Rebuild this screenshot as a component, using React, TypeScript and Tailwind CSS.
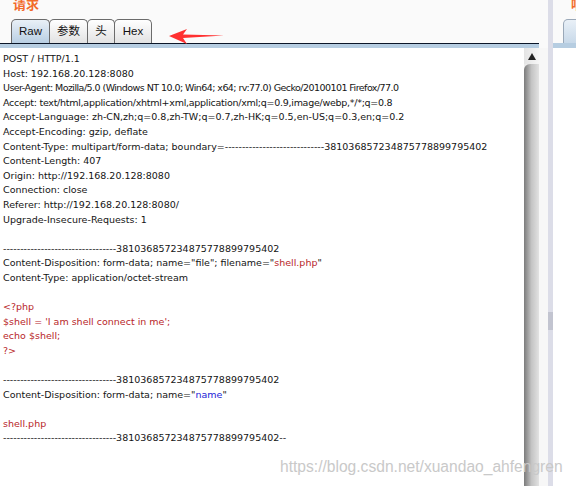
import React from 'react';

const NUM = '381036857234875778899795402';
const HEAD_BOUNDARY = '-----------------------------' + NUM;
const BODY_BOUNDARY = '---------------------------------' + NUM;

type Seg = { t: string; c?: 'red' | 'blue' };
type Line = { segs: Seg[]; cls?: string };

const L = (t: string, cls?: string): Line => ({ segs: [{ t }], cls });

const lines: Line[] = [
    L('POST / HTTP/1.1'),
    L('Host: 192.168.20.128:8080'),
    L('User-Agent: Mozilla/5.0 (Windows NT 10.0; Win64; x64; rv:77.0) Gecko/20100101 Firefox/77.0', 'tracking-[-0.55px]'),
    L('Accept: text/html,application/xhtml+xml,application/xml;q=0.9,image/webp,*/*;q=0.8', 'tracking-[-0.27px]'),
    L('Accept-Language: zh-CN,zh;q=0.8,zh-TW;q=0.7,zh-HK;q=0.5,en-US;q=0.3,en;q=0.2'),
    L('Accept-Encoding: gzip, deflate'),
    L('Content-Type: multipart/form-data; boundary=' + HEAD_BOUNDARY),
    L('Content-Length: 407'),
    L('Origin: http://192.168.20.128:8080'),
    L('Connection: close'),
    L('Referer: http://192.168.20.128:8080/'),
    L('Upgrade-Insecure-Requests: 1'),
    { segs: [] },
    L(BODY_BOUNDARY),
    { segs: [{ t: 'Content-Disposition: form-data; name="file"; filename="' }, { t: 'shell.php', c: 'red' }, { t: '"' }] },
    L('Content-Type: application/octet-stream'),
    { segs: [] },
    { segs: [{ t: '<?php', c: 'red' }] },
    { segs: [{ t: "$shell = 'I am shell connect in me';", c: 'red' }] },
    { segs: [{ t: 'echo $shell;', c: 'red' }] },
    { segs: [{ t: '?>', c: 'red' }] },
    { segs: [] },
    L(BODY_BOUNDARY),
    { segs: [{ t: 'Content-Disposition: form-data; name="' }, { t: 'name', c: 'blue' }, { t: '"' }] },
    { segs: [] },
    { segs: [{ t: 'shell.php', c: 'red' }] },
    L(BODY_BOUNDARY + '--'),
];

const tabs = [
    { label: 'Raw', w: 'w-[39px]' },
    { label: '参数', w: 'w-[39px]' },
    { label: '头', w: 'w-[28px]' },
    { label: 'Hex', w: 'w-[38px]' },
];

const bodyFont = { fontFamily: '"DejaVu Sans", "Noto Sans CJK SC", sans-serif' };
const uiFont = { fontFamily: '"Liberation Sans", "Noto Sans CJK SC", sans-serif' };

export default function App() {
    return (
        <div className="relative flex w-[576px] h-[486px] overflow-hidden bg-[#fafafa]" style={uiFont}>
            {/* Left: request panel */}
            <div className="flex flex-col w-[548px] shrink-0">
                <div className="h-[19px] pl-[13px] text-[13px] font-bold leading-[19px] text-[#f26a2a]">
                    <span className="block -translate-y-[5px]">请求</span>
                </div>

                {/* Tabs */}
                <div className="flex items-end h-[24px] pl-[11px] w-[539px]">
                    {tabs.map((tab, i) => (
                        <div
                            key={tab.label}
                            className={`${tab.w} h-[24px] -ml-px first:ml-0 flex items-center justify-center border border-b-0 border-[#6b6b6b] rounded-t-[5px] text-[11.5px] text-[#111] ${i === 0 ? 'bg-gradient-to-b from-[#e9f0f7] to-[#b9cfe3]' : 'bg-gradient-to-b from-[#ffffff] to-[#e2e2e2]'}`}
                        >
                            {tab.label}
                        </div>
                    ))}
                    {/* annotation arrow */}
                    <svg width="58" height="16" viewBox="0 0 58 16" className="ml-[16px] translate-y-[2px]">
                        <path d="M1 7 L19 0 L15 5.5 L56 6.6 L15 9 L19 15 Z" fill="#ff3030" />
                    </svg>
                </div>
                <div className="w-[539px] h-px bg-[#0b1628]" />
                <div className="w-[539px] h-[4px] bg-[#b6cde1]" />

                {/* Body + scrollbar */}
                <div className="flex flex-1 min-h-0">
                    <div className="w-[524px] bg-white pl-[3px] pt-[4px] text-[9.5px] leading-[14.6px] text-[#141414] whitespace-pre" style={bodyFont}>
                        {lines.map((ln, i) => (
                            <div key={i} className={`h-[14.6px] ${ln.cls ?? ''}`}>
                                {ln.segs.map((s, j) => (
                                    <span key={j} className={s.c === 'red' ? 'text-[#b8262a]' : s.c === 'blue' ? 'text-[#1b1bd6]' : ''}>
                                        {s.t}
                                    </span>
                                ))}
                            </div>
                        ))}
                    </div>
                    <div className="w-[15px] flex flex-col bg-[#ececec]">
                        <div className="h-[16px] flex items-center justify-center bg-gradient-to-r from-[#e4e4e4] to-[#f6f6f6]">
                            <svg width="8" height="7" viewBox="0 0 8 7">
                                <path d="M4 0 L8 7 L0 7 Z" fill="#222" />
                            </svg>
                        </div>
                        <div className="flex-1 rounded-tl-[6px] bg-gradient-to-r from-[#7c7c7c] via-[#c4c4c4] to-[#e2e2e2]" />
                    </div>
                    <div className="flex-1 bg-[#f7f7f7]" />
                </div>
            </div>

            {/* Divider */}
            <div className="w-[5px] shrink-0 bg-[#dcdde8] flex flex-col">
                <div className="mt-[312px] h-[18px] bg-[#c2c4d0]" />
            </div>

            {/* Right: response panel (cut off) */}
            <div className="flex-1 flex flex-col bg-[#fafafa]">
                <div className="h-[19px] pl-[18px] text-[13px] font-bold leading-[19px] text-[#f26a2a]">
                    <span className="block -translate-y-[5px]">响</span>
                </div>
                <div className="flex items-end h-[24px] pl-[10px]">
                    <div className="h-[24px] w-[20px] border border-b-0 border-[#9aa8b8] rounded-tl-[5px] bg-gradient-to-b from-[#e9f0f7] to-[#c8d9e9]" />
                </div>
                <div className="h-[5px] bg-[#b6cde1]" />
                <div className="flex-1 bg-white" />
            </div>

            {/* Watermark */}
            <div className="absolute left-[280px] top-[456px] text-[15.6px] leading-[22px] text-[#c9c9c9]">
                https://blog.csdn.net/xuandao_ahfengren
            </div>
        </div>
    );
}
